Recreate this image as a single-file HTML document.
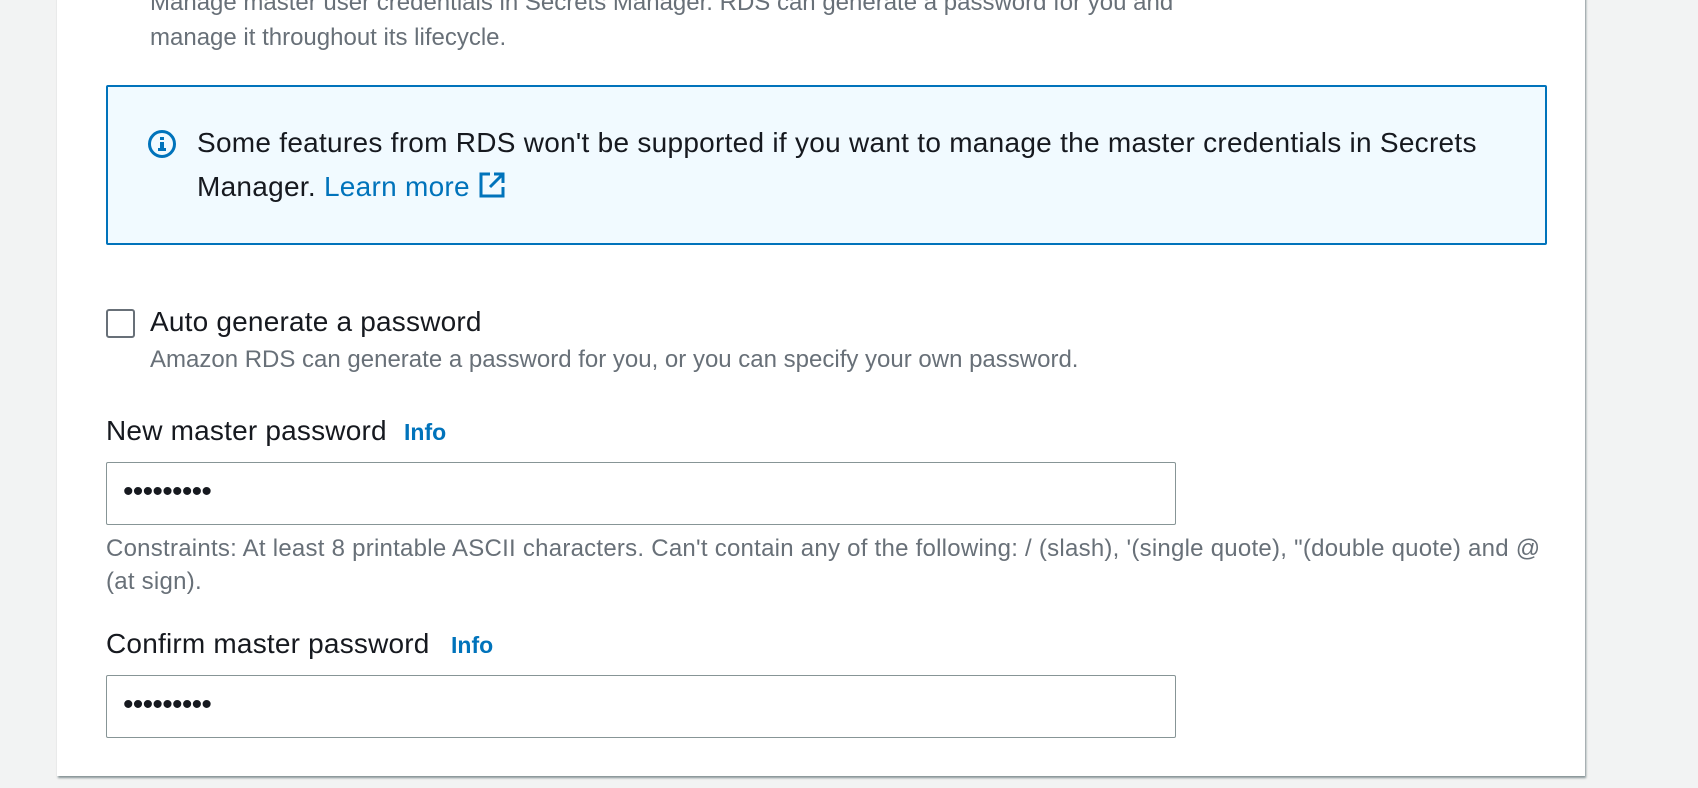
<!DOCTYPE html>
<html><head><meta charset="utf-8"><style>
body{margin:0;width:1698px;height:788px;background:#f2f3f3;font-family:"Liberation Sans",sans-serif;position:relative;overflow:hidden}
.panel{position:absolute;left:57px;top:-10px;width:1528px;height:786px;background:#fff;box-shadow:1px 2px 2px rgba(0,28,36,.45)}
.t{position:absolute;white-space:nowrap}
.sub{color:#687078;font-size:24px}
.main{color:#16191f;font-size:28px}
.info{color:#0073bb;font-weight:bold;font-size:23px}
.box{position:absolute;left:106px;top:85px;width:1437px;height:156px;border:2px solid #0073bb;border-radius:2px;background:#f1faff}
.inp{position:absolute;left:106px;width:1068px;height:61px;border:1px solid #879596;border-radius:2px;background:#fff}
.dots{position:absolute;left:16px;top:12px;font-size:30px;letter-spacing:-0.7px;color:#16191f}
.cb{position:absolute;left:106px;top:309px;width:25px;height:25px;border:2px solid #687078;border-radius:3px}
</style></head><body>
<div class="panel"></div>
<div class="t sub" style="left:150px;top:-11px">Manage master user credentials in Secrets Manager. RDS can generate a password for you and</div>
<div class="t sub" style="left:150px;top:24px">manage it throughout its lifecycle.</div>
<div class="box"></div>
<svg style="position:absolute;left:147px;top:129px" width="30" height="30" viewBox="0 0 30 30"><circle cx="15" cy="15" r="12.5" fill="none" stroke="#0073bb" stroke-width="3"/><rect x="13" y="13" width="4" height="9" fill="#0073bb"/><rect x="13" y="8" width="4" height="3" fill="#0073bb"/><rect x="11" y="19" width="8" height="3" fill="#0073bb"/></svg>
<div class="t main" style="left:197px;top:127px;letter-spacing:0.27px">Some features from RDS won't be supported if you want to manage the master credentials in Secrets</div>
<div class="t main" style="left:197px;top:171px;letter-spacing:0.27px">Manager. <span style="color:#0073bb">Learn more <svg style="vertical-align:-3px" width="28" height="28" viewBox="0 0 28 28"><path d="M12 3H3v22h22v-9" fill="none" stroke="#0073bb" stroke-width="3"/><path d="M16 3h9v9M25 3L12 16" fill="none" stroke="#0073bb" stroke-width="3"/></svg></span></div>
<div class="cb"></div>
<div class="t main" style="left:150px;top:306px;letter-spacing:0.2px">Auto generate a password</div>
<div class="t sub" style="left:150px;top:346px">Amazon RDS can generate a password for you, or you can specify your own password.</div>
<div class="t main" style="left:106px;top:415px;letter-spacing:0.2px">New master password</div>
<div class="t info" style="left:404px;top:419px">Info</div>
<div class="inp" style="top:462px"><span class="dots">•••••••••</span></div>
<div class="t sub" style="left:106px;top:535px;letter-spacing:0.25px">Constraints: At least 8 printable ASCII characters. Can't contain any of the following: / (slash), '(single quote), "(double quote) and @</div>
<div class="t sub" style="left:106px;top:568px;letter-spacing:0.25px">(at sign).</div>
<div class="t main" style="left:106px;top:628px;letter-spacing:0.2px">Confirm master password</div>
<div class="t info" style="left:451px;top:632px">Info</div>
<div class="inp" style="top:675px"><span class="dots">•••••••••</span></div>
</body></html>
